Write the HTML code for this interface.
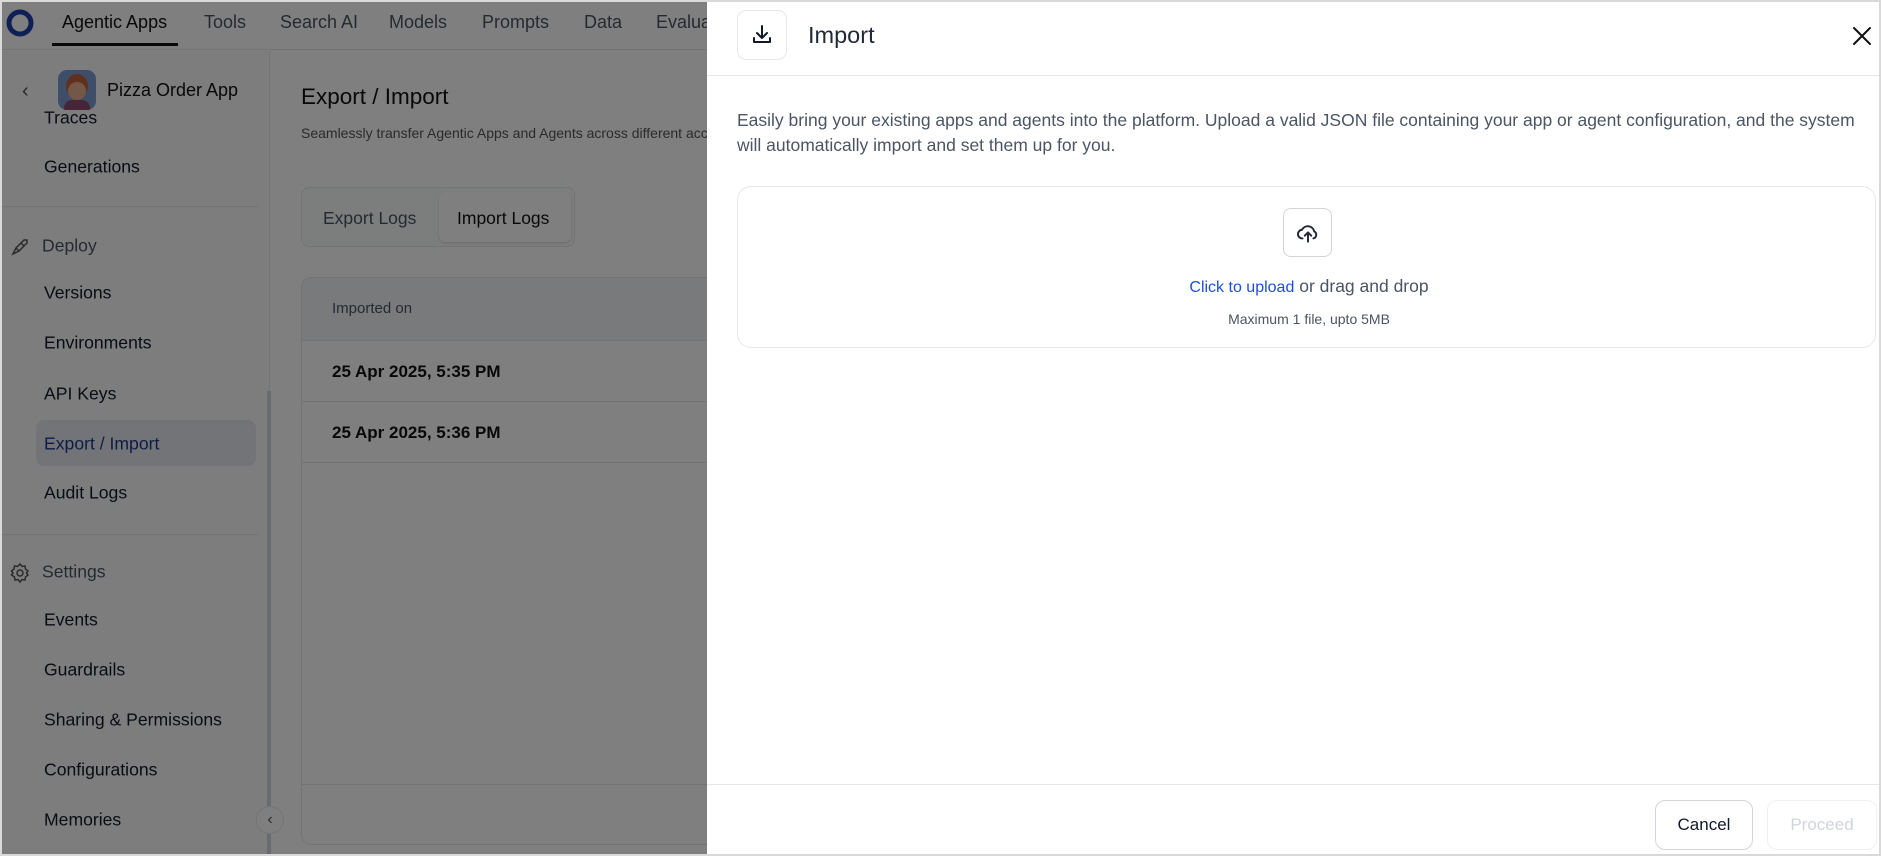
<!DOCTYPE html>
<html><head><meta charset="utf-8"><style>
*{box-sizing:border-box;margin:0;padding:0}
body{width:1881px;height:856px;overflow:hidden;font-family:"Liberation Sans",sans-serif;background:#fff;position:relative;color:#1f2937}
.abs{position:absolute}
.frame{position:absolute;inset:0;border:2px solid #d9d9d9;pointer-events:none;z-index:50}
.top{left:0;top:0;width:1881px;height:50px;border-bottom:1px solid #e5e7eb;background:#fff}
.tab{position:absolute;top:12px;font-size:18px;color:#4b5563}
.side{left:0;top:51px;width:270px;height:805px;background:#fafafa;border-right:1px solid #e5e7eb}
.si{position:absolute;left:44px;font-size:17.6px;color:#111827;transform:translateY(-50%)}
.sh{position:absolute;left:42px;font-size:17.6px;color:#4b5563;transform:translateY(-50%)}
.div{position:absolute;left:0;width:258px;height:1px;background:#e5e7eb}
.overlay{left:0;top:0;width:707px;height:856px;background:rgba(0,0,0,0.5)}
.panel{left:707px;top:0;width:1174px;height:856px;background:#fff}
</style></head><body>
<div class="abs top">
  <svg class="abs" style="left:6px;top:9px" width="28" height="28" viewBox="0 0 28 28"><circle cx="14" cy="14" r="11" fill="none" stroke="#1e40af" stroke-width="5"/><circle cx="13" cy="13" r="6" fill="#fff"/></svg>
  <div class="tab" style="left:62px;color:#111">Agentic Apps</div>
  <div class="abs" style="left:52px;top:43px;width:126px;height:3px;background:#111"></div>
  <div class="tab" style="left:204px">Tools</div>
  <div class="tab" style="left:280px">Search AI</div>
  <div class="tab" style="left:389px">Models</div>
  <div class="tab" style="left:482px">Prompts</div>
  <div class="tab" style="left:584px">Data</div>
  <div class="tab" style="left:656px">Evaluations</div>
</div>
<div class="abs side">
  <div class="abs" style="left:22px;top:29px;font-size:20px;color:#555">‹</div>
  <div class="abs" style="left:58px;top:19px;width:38px;height:40px;border-radius:9px;background:#7d9dd0;overflow:hidden"><div style="position:absolute;left:8px;top:4px;width:22px;height:24px;border-radius:50%;background:#c0603f"></div><div style="position:absolute;left:10px;top:12px;width:18px;height:18px;border-radius:50%;background:#e8b08e"></div><div style="position:absolute;left:6px;top:30px;width:26px;height:12px;border-radius:8px 8px 0 0;background:#8b4a6e"></div></div>
  <div class="abs" style="left:107px;top:29px;font-size:18px;color:#111">Pizza Order App</div>
  <div class="si" style="top:67px">Traces</div>
  <div class="si" style="top:116px">Generations</div>
  <div class="div" style="top:155px"></div>
  <svg class="abs" style="left:8px;top:184px" width="24" height="24" viewBox="0 0 24 24" fill="none" stroke="#555" stroke-width="1.5"><path d="M5 19l3-6 3 3-6 3zM8 13l8-8h3v3l-8 8M13 8l3 3"/></svg>
  <div class="sh" style="top:195px">Deploy</div>
  <div class="si" style="top:242px">Versions</div>
  <div class="si" style="top:292px">Environments</div>
  <div class="si" style="top:343px">API Keys</div>
  <div class="abs" style="left:36px;top:369px;width:220px;height:46px;border-radius:8px;background:#e5e9f0"></div>
  <div class="si" style="top:393px;color:#1e3a8a">Export / Import</div>
  <div class="si" style="top:442px">Audit Logs</div>
  <div class="div" style="top:483px"></div>
  <svg class="abs" style="left:8px;top:510px" width="24" height="24" viewBox="0 0 24 24" fill="none" stroke="#555" stroke-width="1.5"><circle cx="12" cy="12" r="3"/><path d="M12 3l2 2.5 3-.5.5 3 2.5 2-1.5 2 1.5 2-2.5 2-.5 3-3-.5-2 2.5-2-2.5-3 .5-.5-3L3.5 14 5 12 3.5 10 6 8l.5-3 3 .5z"/></svg>
  <div class="sh" style="top:521px">Settings</div>
  <div class="si" style="top:569px">Events</div>
  <div class="si" style="top:619px">Guardrails</div>
  <div class="si" style="top:669px">Sharing &amp; Permissions</div>
  <div class="si" style="top:719px">Configurations</div>
  <div class="si" style="top:769px">Memories</div>
  <div class="abs" style="left:267px;top:340px;width:4px;height:465px;background:#d4d7dc"></div>
  <div class="abs" style="left:256px;top:755px;width:28px;height:28px;border-radius:50%;background:#fff;border:1px solid #e5e7eb;font-size:16px;text-align:center;line-height:25px;color:#555">‹</div>
</div>
<div class="abs" style="left:301px;top:84px;font-size:22.5px;color:#111">Export / Import</div>
<div class="abs" style="left:301px;top:125px;font-size:14px;color:#555;white-space:nowrap">Seamlessly transfer Agentic Apps and Agents across different accounts</div>
<div class="abs" style="left:301px;top:187px;width:274px;height:60px;border:1px solid #e5e7eb;border-radius:8px;background:#f9fafb"></div>
<div class="abs" style="left:323px;top:208px;font-size:17.5px;color:#4b5563">Export Logs</div>
<div class="abs" style="left:439px;top:192px;width:132px;height:50px;border-radius:6px;background:#fff;box-shadow:0 1px 2px rgba(0,0,0,.15)"></div>
<div class="abs" style="left:457px;top:208px;font-size:17.5px;color:#111">Import Logs</div>
<div class="abs" style="left:301px;top:277px;width:500px;height:568px;border:1px solid #e5e7eb;border-radius:10px;background:#fff;overflow:hidden">
  <div style="height:63px;background:#f3f4f6;border-bottom:1px solid #e5e7eb"></div>
  <div class="abs" style="left:30px;top:22px;font-size:15px;color:#4b5563">Imported on</div>
  <div class="abs" style="left:30px;top:84px;font-size:17px;font-weight:bold;color:#111">25 Apr 2025, 5:35 PM</div>
  <div class="abs" style="left:0;top:123px;width:100%;height:1px;background:#e5e7eb"></div>
  <div class="abs" style="left:30px;top:145px;font-size:17px;font-weight:bold;color:#111">25 Apr 2025, 5:36 PM</div>
  <div class="abs" style="left:0;top:184px;width:100%;height:1px;background:#e5e7eb"></div>
  <div class="abs" style="left:0;top:506px;width:100%;height:1px;background:#e5e7eb"></div>
</div>
<div class="abs overlay"></div>
<div class="abs panel">
  <div class="abs" style="left:30px;top:10px;width:50px;height:50px;border:1px solid #e5e7eb;border-radius:9px"></div>
  <svg class="abs" style="left:43px;top:23px" width="24" height="24" viewBox="0 0 24 24" fill="none" stroke="#111827" stroke-width="2" stroke-linecap="round" stroke-linejoin="round"><path d="M12 3v12M7 10l5 5 5-5M4 15v4h16v-4"/></svg>
  <div class="abs" style="left:101px;top:22px;font-size:23.5px;color:#1f2937">Import</div>
  <svg class="abs" style="left:1145px;top:26px" width="20" height="20" viewBox="0 0 20 20" stroke="#111" stroke-width="2" stroke-linecap="round"><path d="M2 2l16 16M18 2L2 18"/></svg>
  <div class="abs" style="left:0;top:75px;width:1174px;height:1px;background:#e5e7eb"></div>
  <div class="abs" style="left:30px;top:108px;width:1125px;font-size:17.5px;line-height:25px;color:#4b5563">Easily bring your existing apps and agents into the platform. Upload a valid JSON file containing your app or agent configuration, and the system will automatically import and set them up for you.</div>
  <div class="abs" style="left:30px;top:186px;width:1139px;height:162px;border:1px solid #e5e7eb;border-radius:14px"></div>
  <div class="abs" style="left:576px;top:208px;width:49px;height:49px;border:1px solid #d1d5db;border-radius:8px"></div>
  <svg class="abs" style="left:588px;top:220px" width="26" height="26" viewBox="0 0 24 24" fill="none" stroke="#1f2937" stroke-width="1.8" stroke-linecap="round" stroke-linejoin="round"><path d="M7 17a4 4 0 0 1-.5-8 6 6 0 0 1 11.2 1.5A3.5 3.5 0 0 1 17 17M12 20v-8M9 14.5l3-3 3 3"/></svg>
  <div class="abs" style="left:0;top:276px;width:1174px;text-align:center;font-size:17.5px;color:#4b5563;padding-left:30px"><span style="color:#1d4ed8;font-size:16px">Click to upload</span> or drag and drop</div>
  <div class="abs" style="left:0;top:311px;width:1174px;text-align:center;font-size:14px;color:#4b5563;padding-left:30px">Maximum 1 file, upto 5MB</div>
  <div class="abs" style="left:0;top:784px;width:1174px;height:1px;background:#e5e7eb"></div>
  <div class="abs" style="left:948px;top:800px;width:98px;height:50px;border:1px solid #d1d5db;border-radius:10px;text-align:center;line-height:48px;font-size:17px;color:#111827">Cancel</div>
  <div class="abs" style="left:1060px;top:800px;width:110px;height:50px;border:1px solid #eef0f2;border-radius:10px;text-align:center;line-height:48px;font-size:17px;color:#d1d5db">Proceed</div>
</div>
<div class="frame"></div>
</body></html>
